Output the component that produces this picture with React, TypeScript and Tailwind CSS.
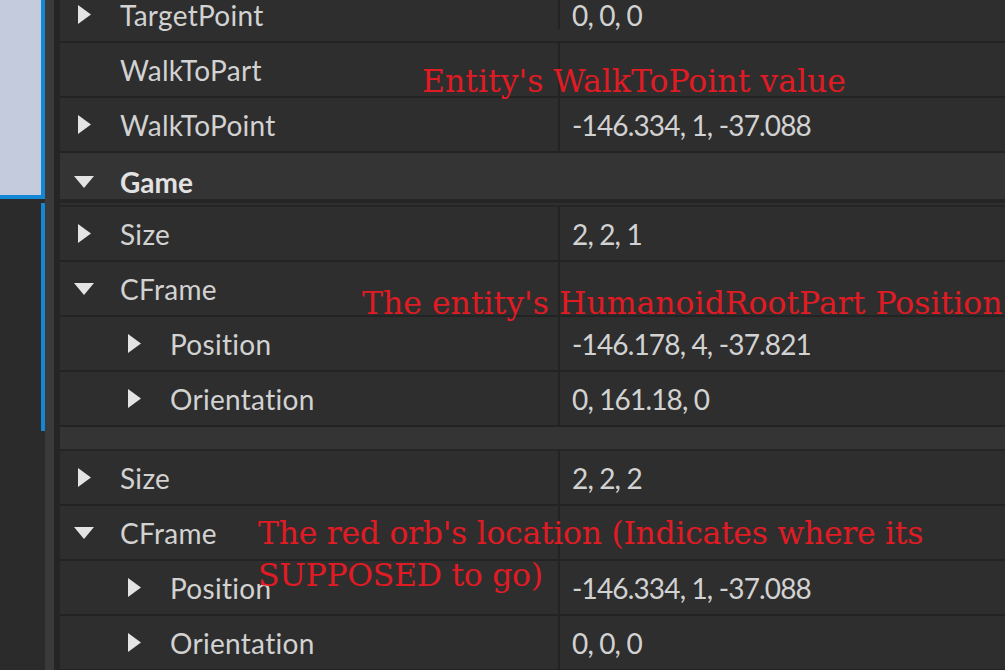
import React from "react";

type Prop = { name: string; value?: string; depth: 1 | 2; arrow?: "right" | "down"; first?: boolean };

function Arrow({ dir }: { dir?: "right" | "down" }) {
  if (!dir) return <span className="w-[30px]" />;
  return (
    <span className="flex w-[30px] justify-center">
      {dir === "right" ? (
        <svg width="13" height="19" viewBox="0 0 13 19">
          <polygon points="0,0 13,9.5 0,19" fill="#e4e4e4" />
        </svg>
      ) : (
        <svg width="20" height="12" viewBox="0 0 20 12">
          <polygon points="0,0 20,0 10,12" fill="#e4e4e4" />
        </svg>
      )}
    </span>
  );
}

function Row({ name, value, depth, arrow, first }: Prop) {
  return (
    <div
      className={`flex shrink-0 border-b-2 border-[#232323] bg-[#2e2e2e] ${first ? "h-[43px] pb-[12px]" : "h-[55px]"}`}
    >
      <div
        className={`flex w-[500px] items-center border-r-2 border-[#232323] ${depth === 1 ? "pl-[9px]" : "pl-[59px]"}`}
      >
        <Arrow dir={arrow} />
        <span className="ml-[21px] tracking-[0.3px]">{name}</span>
      </div>
      <div className="flex flex-1 items-center pl-[12px] tracking-[-0.85px]">{value}</div>
    </div>
  );
}

function Category({ name }: { name: string }) {
  return (
    <div className="flex h-[46px] shrink-0 items-center bg-[#343434] pl-[9px] pt-[12px] font-bold text-[#e2e2e2]">
      <Arrow dir="down" />
      <span className="ml-[21px]">{name}</span>
    </div>
  );
}

export default function App() {
  return (
    <div className="relative flex h-[670px] w-[1005px] overflow-hidden bg-[#2b2b2b] font-['Lato',sans-serif] text-[28px] leading-[28px] text-[#d2d2d2]">
      {/* explorer pane edge */}
      <div className="flex w-[45px] shrink-0 flex-col">
        <div className="h-[199px] border-b-4 border-r-4 border-[#1486d6] bg-[#c3cbdc]" />
        <div className="mt-[4px] h-[228px] border-r-4 border-[#1486d6]" />
      </div>
      <div className="w-[9px] shrink-0 bg-[#3a3a3a]" />
      <div className="w-[6px] shrink-0 bg-[#252525]" />

      {/* properties grid */}
      <div className="flex flex-1 flex-col">
        <Row name="TargetPoint" value="0, 0, 0" depth={1} arrow="right" first />
        <Row name="WalkToPart" depth={1} />
        <Row name="WalkToPoint" value="-146.334, 1, -37.088" depth={1} arrow="right" />
        <Category name="Game" />
        <div className="flex h-[8px] shrink-0 flex-col">
          <div className="h-[4px] bg-[#252525]" />
          <div className="h-[2px] bg-[#2f2f2f]" />
          <div className="h-[2px] bg-[#252525]" />
        </div>
        <Row name="Size" value="2, 2, 1" depth={1} arrow="right" />
        <Row name="CFrame" depth={1} arrow="down" />
        <Row name="Position" value="-146.178, 4, -37.821" depth={2} arrow="right" />
        <Row name="Orientation" value="0, 161.18, 0" depth={2} arrow="right" />
        <div className="h-[24px] shrink-0 border-b-2 border-[#252525] bg-[#343434]" />
        <Row name="Size" value="2, 2, 2" depth={1} arrow="right" />
        <Row name="CFrame" depth={1} arrow="down" />
        <Row name="Position" value="-146.334, 1, -37.088" depth={2} arrow="right" />
        <Row name="Orientation" value="0, 0, 0" depth={2} arrow="right" />
      </div>

      {/* red annotations drawn over the screenshot */}
      <div className="pointer-events-none absolute inset-0 font-['DejaVu_Serif',serif] text-[31.5px] leading-[42px] text-[#e01b24]">
        <div className="absolute left-[422px] top-[60px] whitespace-nowrap">Entity's WalkToPoint value</div>
        <div className="absolute left-[362px] top-[282px] whitespace-nowrap">The entity's HumanoidRootPart Position</div>
        <div className="absolute left-[258px] top-[512px] whitespace-nowrap tracking-[-0.3px]">
          The red orb's location (Indicates where its
          <br />
          SUPPOSED to go)
        </div>
      </div>
    </div>
  );
}
